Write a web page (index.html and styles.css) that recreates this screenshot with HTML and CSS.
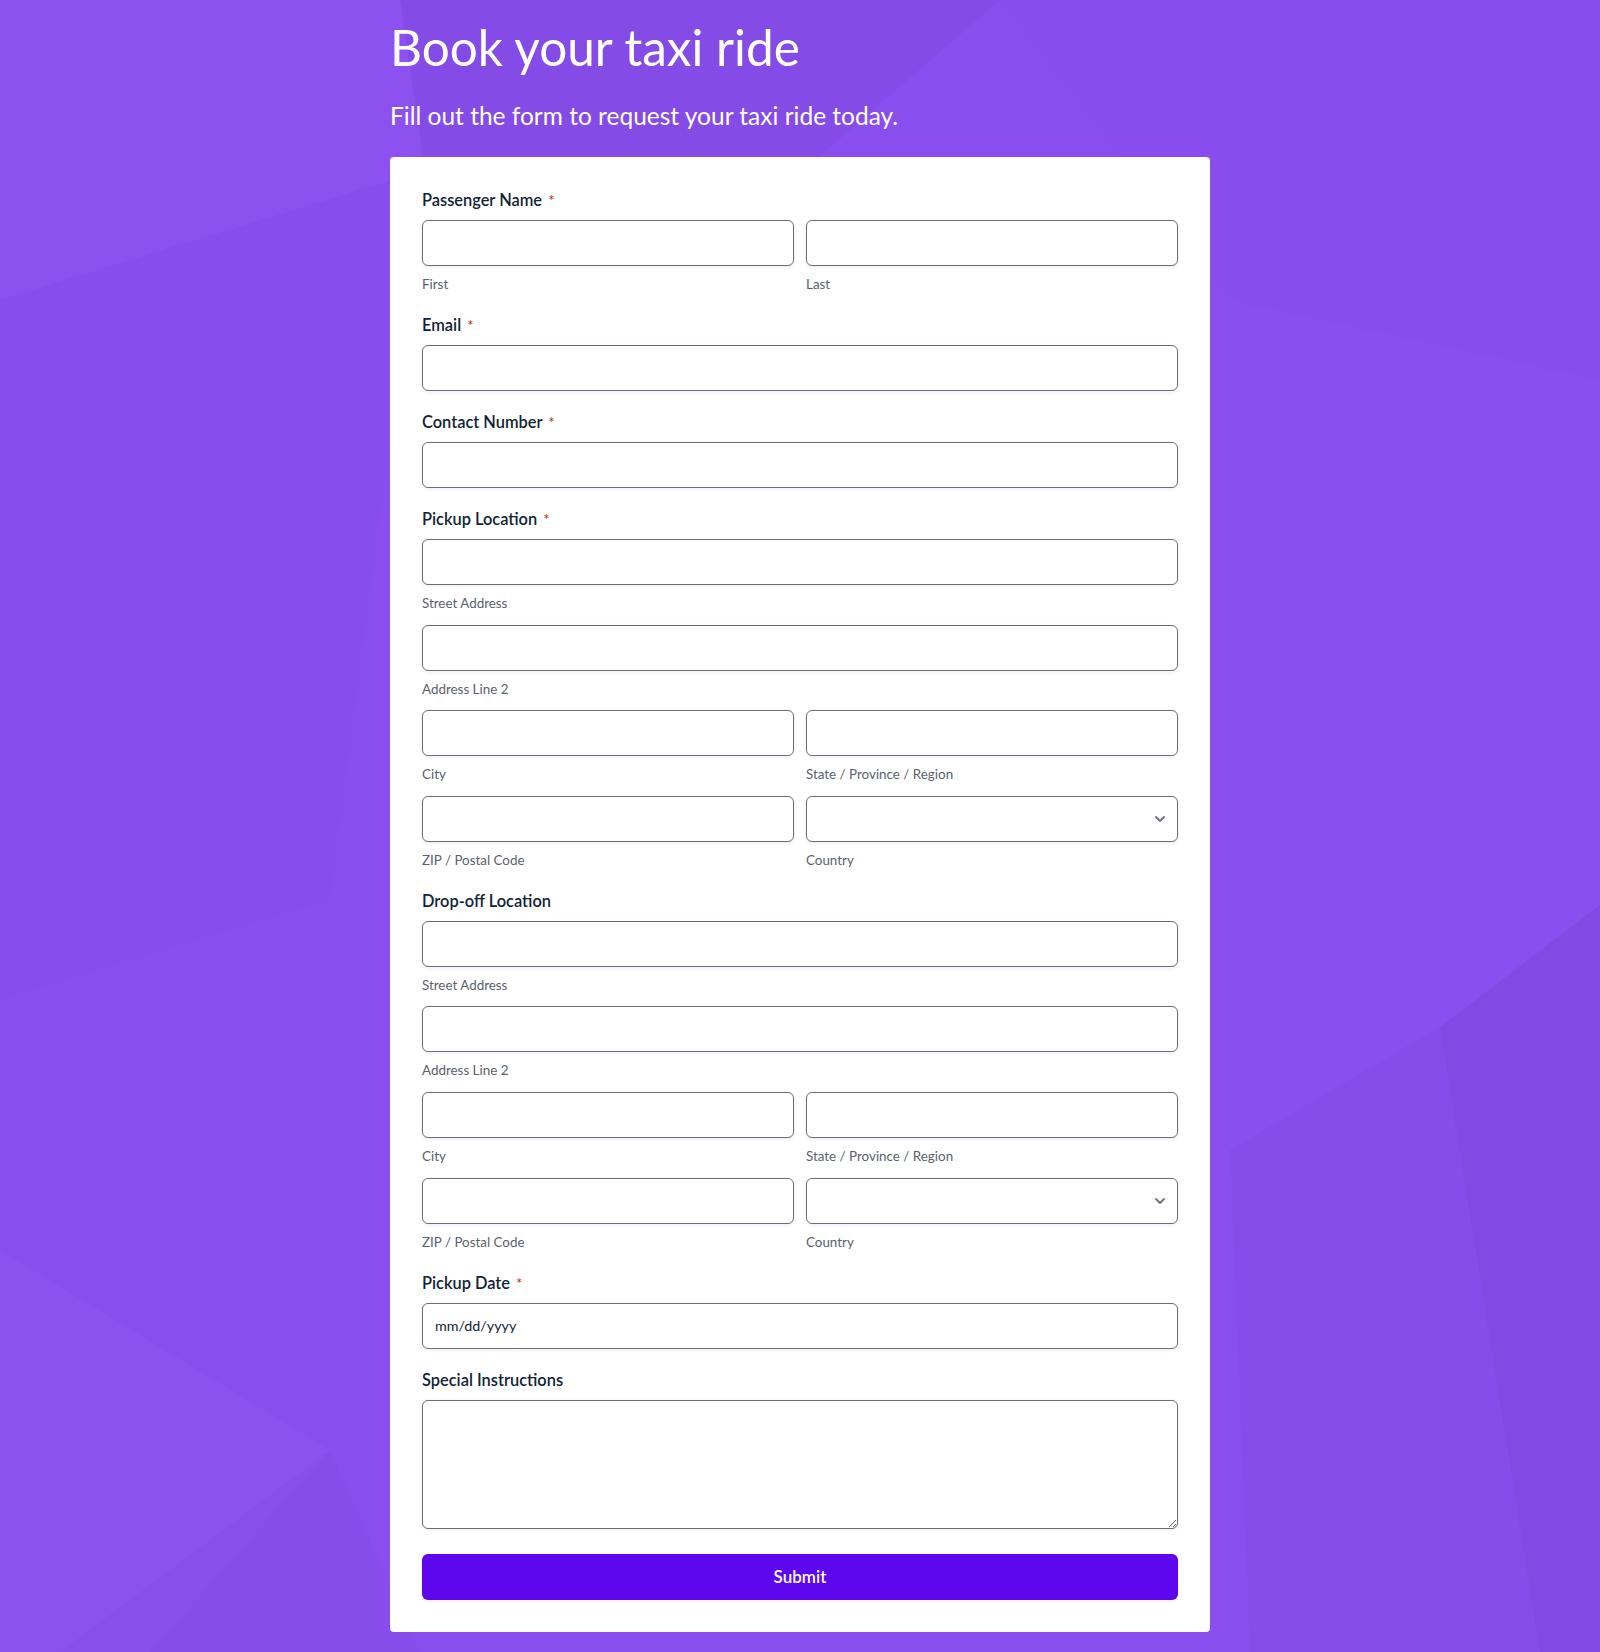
FILE: index.html
```html
<!DOCTYPE html>
<html lang="en">
<head>
<meta charset="utf-8">
<title>Book your taxi ride</title>
<link rel="stylesheet" href="styles.css">
</head>
<body>
<div class="bg" aria-hidden="true">
  <svg viewBox="0 0 1600 1652" preserveAspectRatio="none" width="100%" height="100%">
    <polygon points="0,0 400,0 425,170 0,300" fill="#ffffff" fill-opacity="0.02"/>
    <polygon points="400,0 1000,0 700,260 425,170" fill="#000000" fill-opacity="0.035"/>
    <polygon points="1000,0 1600,0 1600,380 1230,300" fill="#000000" fill-opacity="0.012"/>
    <polygon points="0,300 425,170 330,900 0,1000" fill="#000000" fill-opacity="0.006"/>
    <polygon points="1440,1027 1600,905 1600,1652 1540,1652" fill="#000000" fill-opacity="0.05"/>
    <polygon points="1230,1150 1440,1027 1540,1652 1250,1652" fill="#000000" fill-opacity="0.018"/>
    <polygon points="0,1250 330,1450 150,1652 0,1652" fill="#ffffff" fill-opacity="0.02"/>
    <polygon points="60,1652 330,1450 420,1652" fill="#000000" fill-opacity="0.018"/>
    <polygon points="1230,300 1600,380 1600,905 1440,1027 1230,1150" fill="#ffffff" fill-opacity="0.008"/>
  </svg>
</div>
<main class="wrap">
  <h1 class="title">Book your taxi ride</h1>
  <p class="subtitle">Fill out the form to request your taxi ride today.</p>

  <form class="card" onsubmit="return false">
    <div class="field">
      <div class="label">Passenger Name <span class="req">*</span></div>
      <div class="grid2">
        <div class="cell"><input class="input" type="text"><div class="sublabel">First</div></div>
        <div class="cell"><input class="input" type="text"><div class="sublabel">Last</div></div>
      </div>
    </div>

    <div class="field">
      <div class="label">Email <span class="req">*</span></div>
      <input class="input" type="email">
    </div>

    <div class="field">
      <div class="label">Contact Number <span class="req">*</span></div>
      <input class="input" type="tel">
    </div>

    <div class="field">
      <div class="label">Pickup Location <span class="req">*</span></div>
      <div class="address">
        <div class="cell full"><input class="input" type="text"><div class="sublabel">Street Address</div></div>
        <div class="cell full"><input class="input" type="text"><div class="sublabel">Address Line 2</div></div>
        <div class="grid2">
          <div class="cell"><input class="input" type="text"><div class="sublabel">City</div></div>
          <div class="cell"><input class="input" type="text"><div class="sublabel">State / Province / Region</div></div>
        </div>
        <div class="grid2">
          <div class="cell"><input class="input" type="text"><div class="sublabel">ZIP / Postal Code</div></div>
          <div class="cell">
            <div class="select-wrap">
              <select class="input select"><option></option></select>
              <svg class="chevron" viewBox="0 0 10 6" width="10" height="6"><path d="M1 1l4 4 4-4" fill="none" stroke="#6b7280" stroke-width="1.8" stroke-linecap="round" stroke-linejoin="round"/></svg>
            </div>
            <div class="sublabel">Country</div>
          </div>
        </div>
      </div>
    </div>

    <div class="field">
      <div class="label">Drop-off Location</div>
      <div class="address">
        <div class="cell full"><input class="input" type="text"><div class="sublabel">Street Address</div></div>
        <div class="cell full"><input class="input" type="text"><div class="sublabel">Address Line 2</div></div>
        <div class="grid2">
          <div class="cell"><input class="input" type="text"><div class="sublabel">City</div></div>
          <div class="cell"><input class="input" type="text"><div class="sublabel">State / Province / Region</div></div>
        </div>
        <div class="grid2">
          <div class="cell"><input class="input" type="text"><div class="sublabel">ZIP / Postal Code</div></div>
          <div class="cell">
            <div class="select-wrap">
              <select class="input select"><option></option></select>
              <svg class="chevron" viewBox="0 0 10 6" width="10" height="6"><path d="M1 1l4 4 4-4" fill="none" stroke="#6b7280" stroke-width="1.8" stroke-linecap="round" stroke-linejoin="round"/></svg>
            </div>
            <div class="sublabel">Country</div>
          </div>
        </div>
      </div>
    </div>

    <div class="field">
      <div class="label">Pickup Date <span class="req">*</span></div>
      <input class="input date" type="text" placeholder="mm/dd/yyyy">
    </div>

    <div class="field">
      <div class="label">Special Instructions</div>
      <textarea class="input textarea"></textarea>
    </div>

    <button class="submit" type="submit">Submit</button>
  </form>
</main>
</body>
</html>
```
FILE: styles.css
```css
* { box-sizing: border-box; }

html, body {
  margin: 0;
  padding: 0;
}

body {
  min-height: 1652px;
  background: #8a4eef;
  font-family: Lato, "Open Sans", "Liberation Sans", sans-serif;
  color: #112337;
  position: relative;
  overflow: hidden;
}

.bg {
  position: absolute;
  inset: 0;
  z-index: 0;
}

.bg svg { display: block; }

.wrap {
  position: relative;
  z-index: 1;
  width: 820px;
  margin: 0 auto;
  padding-top: 19px;
}

.title {
  margin: 0;
  font-size: 49.5px;
  line-height: 56px;
  font-weight: 400;
  color: #ffffff;
}

.subtitle {
  margin: 25px 0 0;
  font-size: 24.5px;
  line-height: 32px;
  font-weight: 400;
  color: #ffffff;
}

.card {
  margin-top: 25px;
  background: #ffffff;
  border-radius: 4px;
  padding: 31px 32px 32px;
  display: flex;
  flex-direction: column;
  gap: 19px;
}

.field {
  display: flex;
  flex-direction: column;
}

.label {
  height: 24px;
  font-size: 16.4px;
  line-height: 24px;
  font-weight: 600;
  color: #112337;
  margin-bottom: 8px;
  white-space: nowrap;
}

.req {
  color: #c02b0a;
  font-size: 15px;
  line-height: 1;
  font-weight: 400;
  margin-left: 2px;
}

.grid2 {
  display: grid;
  grid-template-columns: 1fr 1fr;
  column-gap: 12px;
}

.address {
  display: flex;
  flex-direction: column;
  gap: 11.6px;
}

.cell {
  display: flex;
  flex-direction: column;
  min-width: 0;
}

.input {
  display: block;
  width: 100%;
  height: 46px;
  margin: 0;
  border: 1px solid #686e77;
  border-radius: 6px;
  background: #ffffff;
  box-shadow: 0 1px 4px rgba(18, 25, 97, 0.08);
  font-family: Lato, "Open Sans", sans-serif;
  font-size: 14.3px;
  color: #112337;
  padding: 0 12px;
  outline: none;
}

.sublabel {
  height: 20px;
  margin-top: 8px;
  font-size: 13.4px;
  line-height: 20px;
  color: #5b616c;
  white-space: nowrap;
}

.select-wrap {
  position: relative;
  height: 46px;
}

.select {
  appearance: none;
  -webkit-appearance: none;
}

.chevron {
  position: absolute;
  right: 13px;
  top: 20px;
  pointer-events: none;
}

.date::placeholder {
  color: #112337;
  opacity: 1;
}

.textarea {
  height: 129px;
  padding: 12px;
  resize: vertical;
}

.submit {
  margin-top: 6px;
  height: 46px;
  width: 100%;
  border: none;
  border-radius: 6px;
  background: #5e07ef;
  color: #ffffff;
  font-family: Lato, "Open Sans", sans-serif;
  font-size: 17px;
  font-weight: 600;
  box-shadow: 0 1px 4px rgba(18, 25, 97, 0.08);
  cursor: pointer;
}
```
